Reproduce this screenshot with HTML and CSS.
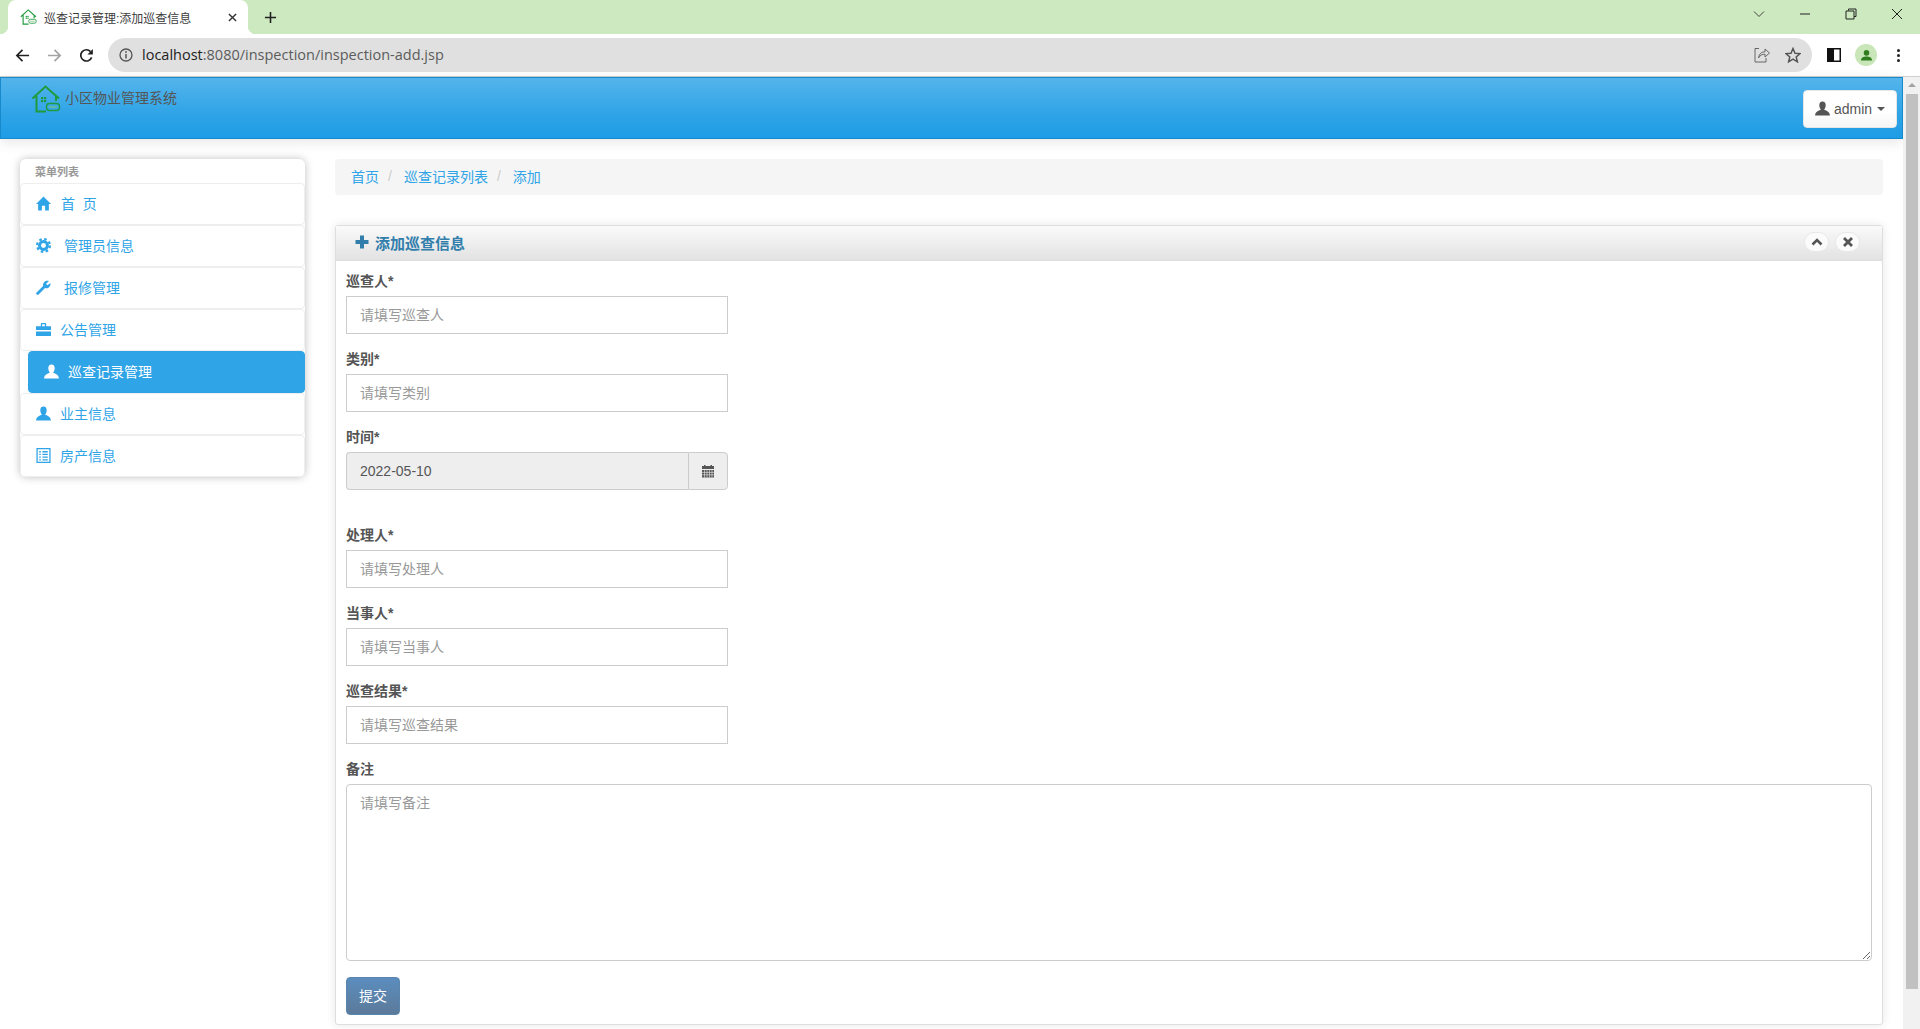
FILE: index.html
```html
<!DOCTYPE html>
<html lang="zh-CN">
<head>
    <meta charset="UTF-8">
    <title>巡查记录管理:添加巡查信息</title>
    <link rel="stylesheet" href="styles.css">
</head>
<body>
    <!-- browser tab strip -->
    <div class="tabstrip">
        <div class="tab">
            <svg class="tab-favicon" viewBox="0 0 30 28"><path d="M1.5 13.5 L14.5 1.5 L28 13.5 M5.5 11 V26.5 H15 M25 11 V16" fill="none" stroke="#1f9a3c" stroke-width="2"/><rect x="10" y="12" width="2.2" height="2.2" fill="#1f9a3c"/><rect x="13" y="12" width="2.2" height="2.2" fill="#1f9a3c"/><rect x="10" y="15" width="2.2" height="2.2" fill="#1f9a3c"/><rect x="13" y="15" width="2.2" height="2.2" fill="#1f9a3c"/><rect x="15.5" y="18" width="13" height="7" rx="3" fill="#fff" stroke="#1f9a3c" stroke-width="1.5"/><path d="M18 21.5 H26" stroke="#8cc79a" stroke-width="1.5"/></svg>
            <span class="tab-title">巡查记录管理:添加巡查信息</span>
            <svg class="tab-close" viewBox="0 0 10 10"><path d="M1 1 L9 9 M9 1 L1 9" stroke="#333" stroke-width="1.6"/></svg>
        </div>
        <svg class="tab-new" viewBox="0 0 14 14"><path d="M7 1 V13 M1 7 H13" stroke="#222" stroke-width="1.7"/></svg>
        <div class="window-controls">
            <svg viewBox="0 0 12 12"><path d="M1 3.5 L6 8.5 L11 3.5" fill="none" stroke="#444" stroke-width="1"/></svg>
            <svg viewBox="0 0 12 12"><path d="M1 6 H11" stroke="#222" stroke-width="1"/></svg>
            <svg viewBox="0 0 12 12"><path d="M3.5 2.5 V1 H11 V8.5 H9 M1 3 H9 V11 H1 Z" fill="none" stroke="#222" stroke-width="1"/></svg>
            <svg viewBox="0 0 12 12"><path d="M1 1 L11 11 M11 1 L1 11" stroke="#222" stroke-width="1"/></svg>
        </div>
    </div>

    <!-- browser toolbar -->
    <div class="toolbar">
        <svg class="nav-btn" viewBox="0 0 16 16"><path d="M15 8 H2 M8 2 L2 8 L8 14" fill="none" stroke="#222" stroke-width="1.8"/></svg>
        <svg class="nav-btn" viewBox="0 0 16 16"><path d="M1 8 H14 M8 2 L14 8 L8 14" fill="none" stroke="#a3a3a3" stroke-width="1.8"/></svg>
        <svg class="nav-btn" viewBox="0 0 16 16"><path d="M13.5 10 A6 6 0 1 1 12.3 3.8" fill="none" stroke="#222" stroke-width="1.8"/><path d="M14.8 1 V7 H9 Z" fill="#222"/></svg>
        <div class="omnibox">
            <svg class="omni-info" viewBox="0 0 14 14"><circle cx="7" cy="7" r="6" fill="none" stroke="#555" stroke-width="1.3"/><path d="M7 6 V10.5" stroke="#555" stroke-width="1.5"/><circle cx="7" cy="4" r="0.9" fill="#555"/></svg>
            <span class="url"><b>localhost</b>:8080/inspection/inspection-add.jsp</span>
            <svg class="omni-share" viewBox="0 0 16 16"><path d="M5 1.5 H1 V15 H12 V11" fill="none" stroke="#666" stroke-width="1"/><path d="M4.5 11 C5 6.5 8 4.8 11 4.8 V2 L15.5 6 L11 10 V7.2 C8.5 7.2 6 8 4.5 11 Z" fill="none" stroke="#666" stroke-width="1"/></svg>
            <svg class="omni-star" viewBox="0 0 16 16"><path d="M8 1.5 L10 6.2 L15 6.6 L11.2 9.9 L12.4 14.8 L8 12.2 L3.6 14.8 L4.8 9.9 L1 6.6 L6 6.2 Z" fill="none" stroke="#555" stroke-width="1.5"/></svg>
        </div>
        <div class="toolbar-right">
            <svg class="side-panel" viewBox="0 0 14 14"><rect width="14" height="14" fill="#111"/><rect x="7" y="1.5" width="5.5" height="11" fill="#fff"/></svg>
            <div class="profile">
                <svg viewBox="0 0 14 14"><circle cx="7" cy="4.2" r="3" fill="#2f7d1f"/><path d="M1 12.5 C1 9 4 8 7 8 C10 8 13 9 13 12.5 Z" fill="#2f7d1f"/></svg>
            </div>
            <div class="menu-dots"><i></i><i></i><i></i></div>
        </div>
    </div>

    <div class="viewport">
        <div class="page">
            <nav class="navbar">
                <a class="brand">
                    <svg class="brand-logo" viewBox="0 0 30 28"><path d="M1.5 13.5 L14.5 1.5 L28 13.5 M5.5 11 V26.5 H15 M25 11 V16" fill="none" stroke="#1f9a3c" stroke-width="2"/><rect x="10" y="12" width="2.2" height="2.2" fill="#1f9a3c"/><rect x="13" y="12" width="2.2" height="2.2" fill="#1f9a3c"/><rect x="10" y="15" width="2.2" height="2.2" fill="#1f9a3c"/><rect x="13" y="15" width="2.2" height="2.2" fill="#1f9a3c"/><rect x="15.5" y="18.5" width="13" height="7" rx="3" fill="none" stroke="#1f9a3c" stroke-width="1.4"/><path d="M18 22 H26" stroke="#6fc28a" stroke-width="1.4"/></svg>
                    小区物业管理系统
                </a>
                <button class="user-btn">
                    <svg class="user-icon" viewBox="0 0 14 14"><path d="M7 0.5 C9 0.5 10 2 10 4 C10 6 9 7.5 8.5 8 C10 9 13.5 9.5 14 13.5 H0 C0.5 9.5 4 9 5.5 8 C5 7.5 4 6 4 4 C4 2 5 0.5 7 0.5 Z" fill="#555"/></svg>
                    admin
                    <span class="caret"></span>
                </button>
            </nav>

            <div class="main">
                <div class="sidebar">
                    <div class="menu-header">菜单列表</div>
                    <a class="menu-item">
                        <svg class="icon" viewBox="0 0 14 14"><path d="M7 0.5 L14 7.5 H12 V13.5 H8.5 V9 H5.5 V13.5 H2 V7.5 H0 Z" fill="#2fa4e7"/></svg>
                        <span class="label-home">首&nbsp;&nbsp;页</span>
                    </a>
                    <a class="menu-item">
                        <svg class="icon" viewBox="0 0 14 14"><circle cx="7" cy="7" r="3.7" fill="none" stroke="#2fa4e7" stroke-width="2.8"/><circle cx="7" cy="7" r="6" fill="none" stroke="#2fa4e7" stroke-width="2" stroke-dasharray="2.4 2.3"/></svg>
                        <span class="label-wide">管理员信息</span>
                    </a>
                    <a class="menu-item">
                        <svg class="icon" viewBox="0 0 14 14"><path d="M1.5 12.5 L7.5 6.5" stroke="#2fa4e7" stroke-width="2.6" stroke-linecap="round"/><path d="M6.5 5 C6.5 2 9.5 0 12 1 L9.5 3.5 L10.5 5 L13.5 3 C14 6 11 8.5 8.5 7.5 Z" fill="#2fa4e7"/></svg>
                        <span class="label-wide">报修管理</span>
                    </a>
                    <a class="menu-item">
                        <svg class="icon" viewBox="0 0 14 14"><path d="M0 4 H4.5 V2 C4.5 1.3 5 1 5.5 1 H8.5 C9 1 9.5 1.3 9.5 2 V4 H14 V7.5 H0 Z M5.7 2.2 V4 H8.3 V2.2 Z M0 8.8 H14 V13 H0 Z" fill="#2fa4e7" fill-rule="evenodd"/></svg>
                        <span>公告管理</span>
                    </a>
                    <a class="menu-item active">
                        <svg class="icon" viewBox="0 0 14 14"><path d="M7 0.5 C9 0.5 10 2 10 4 C10 6 9 7.5 8.5 8 C10 9 13.5 9.5 14 13.5 H0 C0.5 9.5 4 9 5.5 8 C5 7.5 4 6 4 4 C4 2 5 0.5 7 0.5 Z" fill="#fff"/></svg>
                        <span>巡查记录管理</span>
                    </a>
                    <a class="menu-item">
                        <svg class="icon" viewBox="0 0 14 14"><path d="M7 0.5 C9 0.5 10 2 10 4 C10 6 9 7.5 8.5 8 C10 9 13.5 9.5 14 13.5 H0 C0.5 9.5 4 9 5.5 8 C5 7.5 4 6 4 4 C4 2 5 0.5 7 0.5 Z" fill="#2fa4e7"/></svg>
                        <span>业主信息</span>
                    </a>
                    <a class="menu-item">
                        <svg class="icon" viewBox="0 0 14 14"><path d="M1 0.5 H13 V13.5 H1 Z" fill="none" stroke="#2fa4e7" stroke-width="1.2"/><path d="M3 3.5 H4.5 M6 3.5 H11 M3 6 H4.5 M6 6 H11 M3 8.5 H4.5 M6 8.5 H11 M3 11 H4.5 M6 11 H11" stroke="#2fa4e7" stroke-width="1.2"/></svg>
                        <span>房产信息</span>
                    </a>
                </div>

                <div class="content">
                    <ul class="breadcrumb">
                        <li><a>首页</a></li>
                        <li class="sep">/</li>
                        <li><a>巡查记录列表</a></li>
                        <li class="sep">/</li>
                        <li><a>添加</a></li>
                    </ul>

                    <div class="box">
                        <div class="box-header">
                            <h2>
                                <svg class="icon" viewBox="0 0 14 14"><path d="M5 0.5 H9 V5 H13.5 V9 H9 V13.5 H5 V9 H0.5 V5 H5 Z" fill="#317eac"/></svg>
                                添加巡查信息
                            </h2>
                            <div class="box-icons">
                                <a class="box-btn"><svg viewBox="0 0 12 12"><path d="M1.5 8.5 L6 4 L10.5 8.5" fill="none" stroke="#555" stroke-width="2.6"/></svg></a>
                                <a class="box-btn"><svg viewBox="0 0 12 12"><path d="M2 2 L10 10 M10 2 L2 10" fill="none" stroke="#555" stroke-width="2.8"/></svg></a>
                            </div>
                        </div>
                        <form class="box-body">
                            <div class="form-group">
                                <label>巡查人*</label>
                                <input class="form-control" type="text" placeholder="请填写巡查人">
                            </div>
                            <div class="form-group">
                                <label>类别*</label>
                                <input class="form-control" type="text" placeholder="请填写类别">
                            </div>
                            <div class="form-group date-group">
                                <label>时间*</label>
                                <div class="input-group">
                                    <input class="date-input" type="text" value="2022-05-10" readonly>
                                    <span class="input-addon">
                                        <svg class="icon" viewBox="0 0 14 14"><path d="M1 2 H3 V1 H4.5 V2 H9.5 V1 H11 V2 H13 V5 H1 Z" fill="#555"/><path d="M1 6 H13 V13.5 H1 Z" fill="#555"/><path d="M1 8.4 H13 M1 10.8 H13 M3.5 6 V13.5 M6 6 V13.5 M8.5 6 V13.5 M11 6 V13.5" stroke="#eee" stroke-width="0.6"/></svg>
                                    </span>
                                </div>
                            </div>
                            <div class="form-group">
                                <label>处理人*</label>
                                <input class="form-control" type="text" placeholder="请填写处理人">
                            </div>
                            <div class="form-group">
                                <label>当事人*</label>
                                <input class="form-control" type="text" placeholder="请填写当事人">
                            </div>
                            <div class="form-group">
                                <label>巡查结果*</label>
                                <input class="form-control" type="text" placeholder="请填写巡查结果">
                            </div>
                            <div class="form-group">
                                <label>备注</label>
                                <textarea class="form-textarea" placeholder="请填写备注"></textarea>
                            </div>
                            <button class="btn-submit" type="button">提交</button>
                        </form>
                    </div>
                </div>
            </div>
        </div>

        <!-- page scrollbar -->
        <div class="scrollbar">
            <span class="scroll-up"></span>
            <div class="scroll-thumb"></div>
        </div>
    </div>
</body>
</html>
```

FILE: styles.css
```css
* {
    box-sizing: border-box;
}

html, body {
    margin: 0;
    height: 100%;
    overflow: hidden;
}

body {
    font-family: "Liberation Sans", "Noto Sans CJK SC", sans-serif;
    font-size: 14px;
    color: #555;
    background: #fff;
    display: flex;
    flex-direction: column;
}

svg {
    display: block;
    flex: none;
}

/* browser frame */
.tabstrip {
    height: 34px;
    background: #cce9bf;
    display: flex;
    align-items: stretch;
    padding-left: 8px;
}

.tab {
    position: relative;
    width: 240px;
    background: #fff;
    border-radius: 8px 8px 0 0;
    display: flex;
    align-items: center;
    padding: 0 11px 0 12px;
}

.tab::before,
.tab::after {
    content: "";
    position: absolute;
    bottom: 0;
    width: 8px;
    height: 8px;
}

.tab::before {
    left: -8px;
    background: radial-gradient(circle at 0 0, #cce9bf 8px, #fff 8.5px);
}

.tab::after {
    right: -8px;
    background: radial-gradient(circle at 100% 0, #cce9bf 8px, #fff 8.5px);
}

.tab-favicon {
    width: 17px;
    height: 16px;
}

.tab-title {
    margin-left: 7px;
    font-size: 12px;
    color: #3c3c3c;
    flex: 1;
}

.tab-close {
    width: 9px;
    height: 9px;
}

.tab-new {
    width: 13px;
    height: 13px;
    margin: 11px 0 0 16px;
}

.window-controls {
    margin-left: auto;
    display: flex;
    gap: 34px;
    padding: 8px 17px 0 0;
}

.window-controls svg {
    width: 12px;
    height: 12px;
}

.toolbar {
    height: 43px;
    display: flex;
    align-items: center;
    padding: 0 0 0 15px;
    background: #fff;
    border-bottom: 1px solid #d0d0d0;
}

.nav-btn {
    width: 15px;
    height: 15px;
    margin-right: 17px;
}

.omnibox {
    width: 1704px;
    height: 34px;
    margin-left: -3px;
    border-radius: 17px;
    background: #e0e0e0;
    display: flex;
    align-items: center;
    padding: 0 11px 0 11px;
}

.omni-info {
    width: 14px;
    height: 14px;
}

.url {
    margin: 0 0 2px 9px;
    font-family: "Open Sans", sans-serif;
    font-size: 14.5px;
    color: #5c5c5c;
    flex: 1;
}

.url b {
    font-weight: normal;
    color: #222;
}

.omni-share {
    width: 16px;
    height: 16px;
    margin-right: 15px;
}

.omni-star {
    width: 16px;
    height: 16px;
}

.toolbar-right {
    display: flex;
    align-items: center;
    margin-left: 15px;
}

.side-panel {
    width: 14px;
    height: 14px;
}

.profile {
    width: 22px;
    height: 22px;
    margin-left: 14px;
    border-radius: 50%;
    background: #c8e6b8;
    display: flex;
    align-items: center;
    justify-content: center;
}

.profile svg {
    width: 13px;
    height: 13px;
}

.menu-dots {
    margin-left: 20px;
    display: flex;
    flex-direction: column;
    gap: 2px;
}

.menu-dots i {
    width: 3px;
    height: 3px;
    border-radius: 50%;
    background: #222;
}

.viewport {
    flex: 1;
    min-height: 0;
    display: flex;
}

.page {
    flex: 1;
    min-width: 0;
}

.scrollbar {
    width: 17px;
    background: #f1f1f1;
    display: flex;
    flex-direction: column;
    align-items: center;
}

.scroll-up {
    width: 0;
    height: 0;
    margin: 6px 0 7px;
    border-left: 4px solid transparent;
    border-right: 4px solid transparent;
    border-bottom: 4px solid #a3a3a3;
}

.scroll-thumb {
    width: 12px;
    height: 895px;
    background: #c1c1c1;
}

/* site header */
.navbar {
    height: 62px;
    background: linear-gradient(#54b4eb, #2fa4e7 60%, #1d9ce5);
    border: 1px solid #178acc;
    box-shadow: 0 3px 12px rgba(0, 0, 0, 0.1);
    display: flex;
    justify-content: space-between;
    padding: 0 5px 0 30px;
}

.brand {
    display: flex;
    align-items: flex-start;
    padding-top: 7px;
    gap: 4px;
    line-height: 27px;
    color: #555;
}

.brand-logo {
    width: 30px;
    height: 28px;
}

.user-btn {
    align-self: center;
    height: 38px;
    width: 94px;
    margin-top: 1px;
    border: 1px solid #e6e6e6;
    border-radius: 4px;
    background: linear-gradient(#fff, #fff 60%, #f5f5f5);
    font: inherit;
    color: #555;
    display: flex;
    align-items: center;
    justify-content: center;
    gap: 4px;
}

.user-icon {
    width: 15px;
    height: 15px;
}

.icon {
    width: 14px;
    height: 14px;
}

.caret {
    width: 0;
    height: 0;
    margin-left: 1px;
    border-left: 4px solid transparent;
    border-right: 4px solid transparent;
    border-top: 4px solid #555;
}

/* layout under the header */
.main {
    display: flex;
    align-items: flex-start;
    padding: 20px 20px 0 20px;
}

.sidebar {
    width: 285px;
    flex: none;
    border-radius: 6px;
    background: #fff;
    box-shadow: 0 0 8px rgba(0, 0, 0, 0.25);
    margin-right: 30px;
}

.menu-header {
    height: 24px;
    padding-left: 15px;
    font-size: 11px;
    font-weight: bold;
    line-height: 26px;
    color: #999;
}

.menu-item {
    height: 42px;
    display: flex;
    align-items: center;
    gap: 9px;
    padding: 0 0 2px 15px;
    border: 1px solid #eee;
    border-radius: 4px;
    color: #2fa4e7;
}

.menu-item .icon {
    width: 15px;
    height: 15px;
}

.menu-item .label-home {
    margin-left: 1px;
}

.menu-item .label-wide {
    margin-left: 4px;
}

.menu-item.active {
    margin-left: 8px;
    background: #2fa4e7;
    border-color: #2fa4e7;
    color: #fff;
}

.content {
    flex: 1;
    min-width: 0;
}

.breadcrumb {
    list-style: none;
    margin: 0 0 30px;
    padding: 0 16px 2px;
    height: 36px;
    display: flex;
    align-items: center;
    background: #f5f5f5;
    border-radius: 4px;
}

.breadcrumb a {
    color: #2fa4e7;
}

.breadcrumb .sep {
    color: #ccc;
    padding: 0 12px 0 9px;
}

.box {
    height: 800px;
    border: 1px solid #dedede;
    border-radius: 3px;
    background: #fff;
    box-shadow: 0 0 10px rgba(0, 0, 0, 0.1);
}

.box-header {
    height: 35px;
    display: flex;
    align-items: center;
    justify-content: space-between;
    padding: 0 22px 2px 19px;
    background: linear-gradient(#fafafa, #e2e2e2);
    border-bottom: 1px solid #dedede;
}

.box-header h2 {
    margin: 0;
    display: flex;
    align-items: center;
    gap: 6px;
    font-size: 15px;
    font-weight: bold;
    color: #317eac;
}

.box-icons {
    display: flex;
    gap: 6px;
    margin-top: -1px;
}

.box-btn {
    width: 25px;
    height: 20px;
    display: flex;
    align-items: center;
    justify-content: center;
    background: #fbfbfb;
    border: 1px solid #e8e8e8;
    border-radius: 10px;
}

.box-btn svg {
    width: 12px;
    height: 12px;
}

.box-body {
    padding: 10px;
}

.form-group {
    margin-bottom: 15px;
}

.date-group {
    margin-bottom: 35px;
}

.form-group label {
    display: block;
    height: 20px;
    margin-bottom: 5px;
    line-height: 20px;
    font-weight: bold;
    color: #555;
}

.form-control {
    display: block;
    width: 382px;
    height: 38px;
    padding: 0 13px;
    border: 1px solid #ccc;
    border-radius: 0;
    outline: none;
    font: inherit;
    color: #555;
}

::placeholder {
    color: #999;
    opacity: 1;
}

.input-group {
    display: flex;
    width: 382px;
    height: 38px;
}

.date-input {
    flex: 1;
    min-width: 0;
    padding: 0 13px;
    border: 1px solid #ccc;
    border-right: 0;
    border-radius: 4px 0 0 4px;
    background: #eee;
    outline: none;
    font: inherit;
    color: #555;
}

.input-addon {
    width: 40px;
    display: flex;
    align-items: center;
    justify-content: center;
    background: #eee;
    border: 1px solid #ccc;
    border-radius: 0 4px 4px 0;
}

.form-textarea {
    display: block;
    width: 100%;
    height: 177px;
    padding: 7px 13px;
    border: 1px solid #ccc;
    border-radius: 4px;
    outline: none;
    font: inherit;
    color: #555;
}

.btn-submit {
    display: block;
    width: 54px;
    height: 38px;
    margin-top: 16px;
    padding: 0 0 2px;
    border: 1px solid #5a85ad;
    border-radius: 4px;
    background: linear-gradient(#5b8dbe, #5c7a9a);
    color: #fff;
    font: inherit;
}
```
